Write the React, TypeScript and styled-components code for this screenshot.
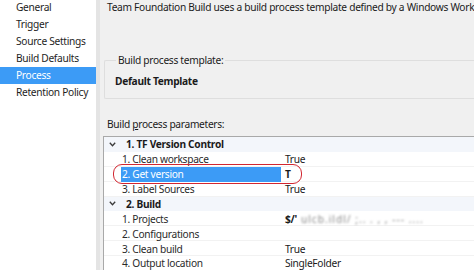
import React from 'react';
import styled, {createGlobalStyle} from 'styled-components';

const GlobalStyle = createGlobalStyle`
    html, body {
        margin: 0;
        padding: 0;
        width: 474px;
        height: 270px;
        overflow: hidden;
        background: #f0f0f0;
        font-family: "Noto Sans", "Open Sans", sans-serif;
        font-size: 10.2px;
        letter-spacing: -0.3px;
        color: #1b1b1b;
    }
`;

const Page = styled.div`
    display: flex;
    width: 474px;
    height: 270px;
    overflow: hidden;
`;

const Sidebar = styled.nav`
    width: 96px;
    flex: none;
    background: #ffffff;
    border-right: 4px solid #e4e4e4;
`;

const NavList = styled.ul`
    list-style: none;
    margin: -1px 0 0;
    padding: 0;
`;

const NavItem = styled.li<{ $active?: boolean }>`
    height: 17px;
    line-height: 17px;
    padding-left: 16px;
    white-space: nowrap;
    background: ${p => p.$active ? '#3c9bf6' : 'transparent'};
    color: ${p => p.$active ? '#ffffff' : '#1e1e1e'};
`;

const Content = styled.main`
    flex: 1;
    min-width: 0;
    padding-left: 7px;
    white-space: nowrap;
    overflow: hidden;
`;

const Intro = styled.p`
    margin: 0;
    line-height: 14px;
`;

const TemplateBox = styled.fieldset`
    margin: 39px 0 0 -3px;
    padding: 7px 0 10px 10px;
    border: 1px solid #dedede;
    border-right: none;
    border-radius: 2px 0 0 2px;
`;

const BoxLegend = styled.legend`
    padding: 0 2px;
    margin-left: 1px;
    line-height: 14px;
`;

const TemplateName = styled.div`
    font-weight: 700;
    line-height: 14px;
`;

const ParamsLabel = styled.div`
    margin-top: 18px;
    line-height: 14px;
    u {
        text-decoration-thickness: 1px;
    }
`;

const Grid = styled.div`
    margin: 5px 0 0 -4px;
    background: #ffffff;
    border-top: 1px solid #a9a9a9;
    border-left: 1px solid #a9a9a9;
`;

const GroupRow = styled.div`
    display: flex;
    align-items: center;
    height: 14.875px;
    background: #f3f6fb;
    font-weight: 700;
`;

const Chevron = styled.svg`
    width: 7px;
    height: 5px;
    margin: 0 10px 0 5px;
    flex: none;
`;

const Row = styled.div`
    position: relative;
    display: flex;
    align-items: stretch;
    height: 14.875px;
    box-shadow: inset 0 -1px 0 #f2f2f2;
`;

const NameCell = styled.div<{ $selected?: boolean }>`
    width: 159px;
    margin-left: 17px;
    padding-left: 1px;
    flex: none;
    display: flex;
    align-items: center;
    background: ${p => p.$selected ? '#3c9bf6' : 'transparent'};
    color: ${p => p.$selected ? '#ffffff' : '#2a2a2a'};
`;

const ValueCell = styled.div<{ $bold?: boolean }>`
    flex: 1;
    min-width: 0;
    overflow: hidden;
    padding-left: 4px;
    display: flex;
    align-items: center;
    font-weight: ${p => p.$bold ? 700 : 400};
`;

const Redacted = styled.span`
    margin-left: 4px;
    color: #8a8a8a;
    font-weight: 400;
    filter: blur(1.1px);
    letter-spacing: 1px;
`;

const Annotation = styled.span`
    position: absolute;
    left: 9px;
    top: -3px;
    width: 187px;
    height: 18px;
    border: 1.5px solid #d22630;
    border-radius: 9px;
    pointer-events: none;
`;

interface param {
    name: string;
    value?: string;
    selected?: boolean;
    redacted?: boolean;
}

interface group {
    title: string;
    params: param[];
}

const navItems = ['General', 'Trigger', 'Source Settings', 'Build Defaults', 'Process', 'Retention Policy'];

const groups: group[] = [
    {
        title: '1. TF Version Control',
        params: [
            {name: '1. Clean workspace', value: 'True'},
            {name: '2. Get version', value: 'T', selected: true},
            {name: '3. Label Sources', value: 'True'},
        ]
    },
    {
        title: '2. Build',
        params: [
            {name: '1. Projects', value: "$/'", redacted: true},
            {name: '2. Configurations'},
            {name: '3. Clean build', value: 'True'},
            {name: '4. Output location', value: 'SingleFolder'},
        ]
    }
];

function App() {
    return (
        <Page>
            <GlobalStyle/>
            <Sidebar>
                <NavList>
                    {navItems.map((item) => (
                        <NavItem key={item} $active={item === 'Process'}>{item}</NavItem>
                    ))}
                </NavList>
            </Sidebar>
            <Content>
                <Intro>Team Foundation Build uses a build process template defined by a Windows Workflow (XAML) file.</Intro>
                <TemplateBox>
                    <BoxLegend>Build process template:</BoxLegend>
                    <TemplateName>Default Template</TemplateName>
                </TemplateBox>
                <ParamsLabel>Build <u>p</u>rocess parameters:</ParamsLabel>
                <Grid>
                    {groups.map((g) => (
                        <React.Fragment key={g.title}>
                            <GroupRow>
                                <Chevron viewBox="0 0 7 5">
                                    <path d="M0.8 0.8 L3.5 3.8 L6.2 0.8" fill="none" stroke="#3a3a3a" strokeWidth="1.3"/>
                                </Chevron>
                                {g.title}
                            </GroupRow>
                            {g.params.map((p) => (
                                <Row key={p.name}>
                                    <NameCell $selected={p.selected}>{p.name}</NameCell>
                                    <ValueCell $bold={p.selected || p.redacted}>
                                        {p.value}
                                        {p.redacted && <Redacted>ulcb.ildl/ ;..  .  , ,  ---  ....</Redacted>}
                                    </ValueCell>
                                    {p.selected && <Annotation/>}
                                </Row>
                            ))}
                        </React.Fragment>
                    ))}
                </Grid>
            </Content>
        </Page>
    );
}

export default App;
